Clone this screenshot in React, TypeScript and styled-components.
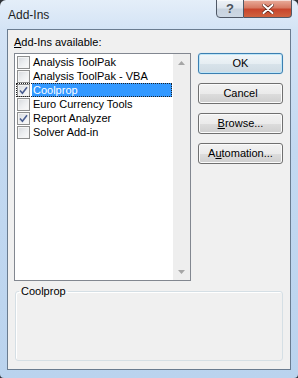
import styled, { createGlobalStyle } from "styled-components";

const GlobalStyle = createGlobalStyle`
    html, body {
        margin: 0;
        padding: 0;
        background: #2f3238;
    }
    body {
        font-family: "Liberation Sans", Arial, sans-serif;
        font-size: 11px;
        color: #000;
    }
`;

const Window = styled.div`
    width: 298px;
    height: 378px;
    box-sizing: border-box;
    display: flex;
    flex-direction: column;
    border-radius: 6px 6px 4px 4px;
    background: linear-gradient(180deg, #e4eef9 0%, #d3e3f5 8%, #c3d9f1 40%, #bad3ee 100%);
    overflow: hidden;
`;

const TitleBar = styled.div`
    height: 29px;
    flex: none;
    display: flex;
    justify-content: space-between;
    align-items: flex-start;
`;

const Title = styled.div`
    padding: 9px 0 0 8px;
    font-size: 12px;
    line-height: 13px;
    color: #1e1e1e;
`;

const CaptionButtons = styled.div`
    display: flex;
    margin-right: 6px;
    margin-top: -1px;
`;

const CaptionButton = styled.div<{ $close?: boolean }>`
    width: ${p => (p.$close ? 48 : 28)}px;
    height: 19px;
    box-sizing: border-box;
    display: flex;
    justify-content: center;
    align-items: center;
    border: 1px solid #4f5866;
    border-left-width: ${p => (p.$close ? 0 : 1)}px;
    border-radius: ${p => (p.$close ? "0 0 4px 0" : "0 0 0 4px")};
    background: ${p =>
        p.$close
            ? "linear-gradient(180deg, #e9ad9c 0%, #d77a63 45%, #c8452c 55%, #d0633f 100%)"
            : "linear-gradient(180deg, #eef2f7 0%, #dfe6ee 45%, #c8d3df 55%, #cdd8e4 100%)"};
    box-shadow: inset 0 1px 0 rgba(255, 255, 255, 0.6);
    color: #4a525c;
    font-size: 13px;
    font-weight: bold;
`;

const Client = styled.div`
    flex: 1;
    margin: 0 7px 8px 7px;
    border: 1px solid #6a7c90;
    background: #f0f0f0;
    display: flex;
    flex-direction: column;
    padding: 5px 7px 8px 6px;
`;

const TopSection = styled.div`
    display: flex;
    gap: 7px;
`;

const ListColumn = styled.div`
    display: flex;
    flex-direction: column;
`;

const Label = styled.div`
    line-height: 15px;
    margin-bottom: 3px;
`;

const Underline = styled.span`
    text-decoration: underline;
`;

const ListBox = styled.div`
    width: 177px;
    height: 228px;
    box-sizing: border-box;
    border: 1px solid #828790;
    background: #fff;
    display: flex;
`;

const Items = styled.div`
    flex: 1;
    padding-top: 1px;
    display: flex;
    flex-direction: column;
`;

const Item = styled.div<{ $focused?: boolean }>`
    height: 14px;
    margin: 0 1px;
    box-sizing: border-box;
    display: flex;
    align-items: center;
    padding-left: 1px;
    gap: 2px;
    outline: ${p => (p.$focused ? "1px dotted #222" : "none")};
    outline-offset: -1px;
`;

const CheckBox = styled.span`
    width: 13px;
    height: 13px;
    box-sizing: border-box;
    flex: none;
    border: 1px solid #8e8f8f;
    background: linear-gradient(135deg, #d5d8dc 0%, #eceef0 50%, #fbfbfb 100%);
    box-shadow: inset 0 0 0 1px #f4f4f4;
    display: flex;
    justify-content: center;
    align-items: center;
`;

const ItemText = styled.span<{ $selected?: boolean }>`
    flex: 1;
    height: 14px;
    line-height: 14px;
    padding-left: 1px;
    background: ${p => (p.$selected ? "#3399ff" : "transparent")};
    color: ${p => (p.$selected ? "#fff" : "#000")};
    white-space: nowrap;
`;

const ScrollBar = styled.div`
    width: 17px;
    flex: none;
    background: #eeeeee;
    display: flex;
    flex-direction: column;
    justify-content: space-between;
    align-items: center;
`;

const ScrollArrow = styled.div`
    height: 17px;
    display: flex;
    align-items: center;
    justify-content: center;
`;

const ButtonColumn = styled.div`
    display: flex;
    flex-direction: column;
    gap: 9px;
    padding-top: 18px;
`;

const Button = styled.div<{ $default?: boolean }>`
    width: 85px;
    height: 21px;
    box-sizing: border-box;
    border: 1px solid ${p => (p.$default ? "#3c7fb1" : "#707070")};
    border-radius: 3px;
    background: ${p =>
        p.$default
            ? "linear-gradient(180deg, #f1f6f9 0%, #e6eef3 50%, #d8e3ea 51%, #cfdbe4 100%)"
            : "linear-gradient(180deg, #f2f2f2 0%, #ebebeb 50%, #dddddd 51%, #cfcfcf 100%)"};
    box-shadow: ${p =>
        p.$default
            ? "inset 0 0 0 1px #bfe6f8, 0 0 1px #9cd4f2"
            : "inset 0 0 0 1px #fbfbfb"};
    display: flex;
    justify-content: center;
    align-items: center;
    line-height: 13px;
`;

const GroupBox = styled.fieldset`
    flex: 1;
    margin: 3px 0 0 1px;
    padding: 0;
    border: 1px solid #d5dfe5;
    border-radius: 3px;
    box-shadow: inset 1px 1px 0 #fff;
`;

const GroupLabel = styled.legend`
    margin-left: 3px;
    padding: 0 2px;
    line-height: 14px;
    font-size: 11px;
`;

const CheckMark = () => (
    <svg width="9" height="9" viewBox="0 0 9 9">
        <path d="M1 4.5 L3.4 7.2 L8 1.2" fill="none" stroke="#4a5d8f" strokeWidth="1.6" />
    </svg>
);

const Arrow = ({ up }: { up?: boolean }) => (
    <svg width="7" height="4" viewBox="0 0 7 4">
        <path d={up ? "M0 4 L3.5 0 L7 4 Z" : "M0 0 L3.5 4 L7 0 Z"} fill="#a6a6a6" />
    </svg>
);

interface IAddIn {
    name: string;
    checked: boolean;
}

const ADD_INS: IAddIn[] = [
    { name: "Analysis ToolPak", checked: false },
    { name: "Analysis ToolPak - VBA", checked: false },
    { name: "Coolprop", checked: true },
    { name: "Euro Currency Tools", checked: false },
    { name: "Report Analyzer", checked: true },
    { name: "Solver Add-in", checked: false },
];

const SELECTED = "Coolprop";

const App = () => {
    return (
        <>
            <GlobalStyle />
            <Window>
                <TitleBar>
                    <Title>Add-Ins</Title>
                    <CaptionButtons>
                        <CaptionButton>?</CaptionButton>
                        <CaptionButton $close>
                            <svg width="12" height="10" viewBox="0 0 12 10">
                                <path d="M1.5 1 L10.5 9 M10.5 1 L1.5 9" stroke="#5a2418" strokeWidth="3.4" strokeLinecap="round" />
                                <path d="M1.5 1 L10.5 9 M10.5 1 L1.5 9" stroke="#fff" strokeWidth="2" strokeLinecap="round" />
                            </svg>
                        </CaptionButton>
                    </CaptionButtons>
                </TitleBar>
                <Client>
                    <TopSection>
                        <ListColumn>
                            <Label><Underline>A</Underline>dd-Ins available:</Label>
                            <ListBox>
                                <Items>
                                    {ADD_INS.map(addIn => (
                                        <Item key={addIn.name} $focused={addIn.name === SELECTED}>
                                            <CheckBox>{addIn.checked && <CheckMark />}</CheckBox>
                                            <ItemText $selected={addIn.name === SELECTED}>{addIn.name}</ItemText>
                                        </Item>
                                    ))}
                                </Items>
                                <ScrollBar>
                                    <ScrollArrow><Arrow up /></ScrollArrow>
                                    <ScrollArrow><Arrow /></ScrollArrow>
                                </ScrollBar>
                            </ListBox>
                        </ListColumn>
                        <ButtonColumn>
                            <Button $default>OK</Button>
                            <Button>Cancel</Button>
                            <Button><span><Underline>B</Underline>rowse...</span></Button>
                            <Button><span>A<Underline>u</Underline>tomation...</span></Button>
                        </ButtonColumn>
                    </TopSection>
                    <GroupBox>
                        <GroupLabel>Coolprop</GroupLabel>
                    </GroupBox>
                </Client>
            </Window>
        </>
    );
};

export default App;
